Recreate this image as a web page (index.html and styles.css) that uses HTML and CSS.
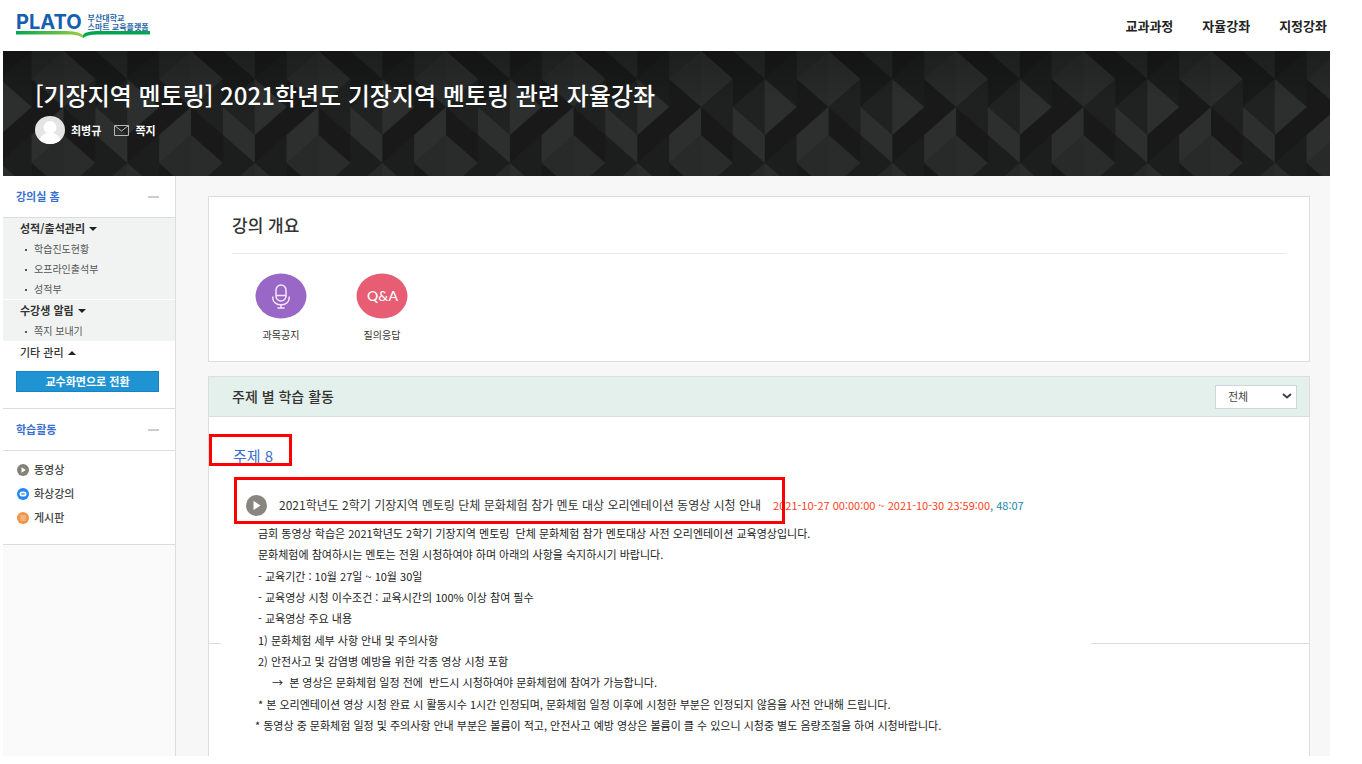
FILE: index.html
```html
<!DOCTYPE html>
<html lang="ko">
<head>
<meta charset="utf-8">
<meta name="viewport" content="width=device-width, initial-scale=1">
<title>PLATO 부산대학교 스마트 교육플랫폼</title>
<link rel="stylesheet" href="styles.css">
</head>
<body>
<header class="topbar">
  <a class="logo" href="#">
    <span class="logo-row">
      <span class="logo-word">PLATO</span>
      <span class="logo-sub"><span>부산대학교</span><span>스마트 교육플랫폼</span></span>
    </span>
    <svg class="logo-line" viewBox="0 0 134 7" width="134" height="7" aria-hidden="true">
      <defs><linearGradient id="leaf" x1="0" x2="1" y1="0" y2="0"><stop offset="0" stop-color="#00a651"/><stop offset=".35" stop-color="#39b54a"/><stop offset="1" stop-color="#9aca3c"/></linearGradient></defs>
      <path d="M0 0H46C58 0 64 1 67 4.500V7C63 4 58 3.500 50 3.500H0Z" fill="url(#leaf)"/>
      <path d="M134 0H84C74 0 69 1 67 4V7C71 4 76 3.500 84 3.500H134Z" fill="#00a651"/>
    </svg>
  </a>
  <nav class="menu">
    <a href="#">교과과정</a>
    <a href="#">자율강좌</a>
    <a href="#">지정강좌</a>
  </nav>
</header>

<section class="banner">
  <svg class="banner-art" width="100%" height="100%" aria-hidden="true">
    <defs>
      <pattern id="folds" width="127.500" height="140" patternUnits="userSpaceOnUse" patternTransform="translate(-3.200 0)">
        <svg width="127.500" height="140" viewBox="0 0 4 5" preserveAspectRatio="none">
          <rect width="4" height="5" fill="#191919"/>
          <path fill="#1b1d1c" d="M0 1L1 0V2Z"/>
          <path fill="#2d2f2e" d="M0 1L1 2L0 3Z"/>
          <path fill="#1c1e1d" d="M0 4L1 3V5Z"/>
          <path fill="#2b2d2c" d="M0 4L1 5H0Z"/>
          <path fill="#242625" d="M1 0H2L1 1Z"/>
          <path fill="#282a29" d="M1 1L2 0V2Z"/>
          <path fill="#2d2f2e" d="M1 3L2 2V3L1 4Z"/>
          <path fill="#282a29" d="M1 4L2 3V5Z"/>
          <path fill="#2a2c2b" d="M2 0L3 1L2 2Z"/>
          <path fill="#1f2120" d="M2 2L3 1V3Z"/>
          <path fill="#2a2c2b" d="M2 3L3 4L2 5Z"/>
          <path fill="#1c1e1d" d="M2 5L3 4V5Z"/>
          <path fill="#242625" d="M3 0H4V1Z"/>
          <path fill="#181a19" d="M3 0L4 1L3 2Z"/>
          <path fill="#202221" d="M3 2L4 1V3Z"/>
          <path fill="#2d2f2e" d="M3 2L4 3V4L3 3Z"/>
          <path fill="#1c1e1d" d="M3 3L4 4L3 5Z"/>
          <path fill="#272928" d="M3 5L4 4V5Z"/>
        </svg>
      </pattern>
      <linearGradient id="shade" x1="0" x2="0" y1="0" y2="1"><stop offset="0" stop-color="#000" stop-opacity=".2"/><stop offset=".4" stop-color="#000" stop-opacity="0"/></linearGradient>
    </defs>
    <rect width="100%" height="100%" fill="url(#folds)"/>
    <rect width="100%" height="100%" fill="url(#shade)"/>
  </svg>
  <h1 class="course-title">[기장지역 멘토링] 2021학년도 기장지역 멘토링 관련 자율강좌</h1>
  <div class="teacher">
    <svg class="avatar" viewBox="0 0 30 28" width="30" height="28" aria-hidden="true">
      <defs><clipPath id="face"><ellipse cx="15" cy="14" rx="15" ry="14"/></clipPath></defs>
      <g clip-path="url(#face)"><rect width="30" height="28" fill="#e4e4e4"/><ellipse cx="15" cy="11.500" rx="6.500" ry="6.500" fill="#fff"/><path d="M4 28C4 20 9 18 12 17H18C21 18 26 20 26 28Z" fill="#fff"/></g>
    </svg>
    <a class="teacher-name" href="#">최병규</a>
    <a class="message" href="#">
      <svg viewBox="0 0 15 11" width="15" height="11" fill="none" stroke="#b5b5b5" aria-hidden="true"><path d="M.5.5H14.500V10.500H.5ZM.5.5L7.500 6L14.500.5"/></svg>
      쪽지
    </a>
  </div>
</section>

<div class="columns">
  <aside class="sidebar">
    <section class="side-block">
      <div class="side-head"><h2>강의실 홈</h2><button class="fold" type="button" aria-label="강의실 홈 접기"></button></div>
      <div class="group">
        <h3>성적/출석관리 <i class="caret"></i></h3>
        <ul><li><a href="#">학습진도현황</a></li><li><a href="#">오프라인출석부</a></li><li><a href="#">성적부</a></li></ul>
      </div>
      <div class="group">
        <h3>수강생 알림 <i class="caret"></i></h3>
        <ul><li><a href="#">쪽지 보내기</a></li></ul>
      </div>
      <div class="group closed"><h3>기타 관리 <i class="caret up"></i></h3></div>
      <button class="switch" type="button">교수화면으로 전환</button>
    </section>
    <section class="side-block">
      <div class="side-head"><h2>학습활동</h2><button class="fold" type="button" aria-label="학습활동 접기"></button></div>
      <ul class="activities">
        <li><a href="#"><svg viewBox="0 0 12 12" width="12" height="12" aria-hidden="true"><circle cx="6" cy="6" r="6" fill="#858179"/><path d="M4.500 3.200L8.800 6L4.500 8.800Z" fill="#fff"/></svg>동영상</a></li>
        <li><a href="#"><svg viewBox="0 0 12 12" width="12" height="12" aria-hidden="true"><circle cx="6" cy="6" r="6" fill="#2386f5"/><rect x="2.500" y="3.500" width="7" height="5" rx="2.500" fill="#fff"/><path d="M4.300 6H7.700" stroke="#2386f5" stroke-width="1.200"/></svg>화상강의</a></li>
        <li><a href="#"><svg viewBox="0 0 12 12" width="12" height="12" aria-hidden="true"><circle cx="6" cy="6" r="6" fill="#f0944a"/><path d="M3.200 4H8.800M3.200 6H8.800M3.200 8H8.800" stroke="#fbe0c8" stroke-width=".8"/></svg>게시판</a></li>
      </ul>
    </section>
  </aside>

  <main class="content">
    <section class="panel overview">
      <h2>강의 개요</h2>
      <ul class="shortcuts">
        <li><a href="#">
          <svg viewBox="0 0 52 46" width="52" height="46" aria-hidden="true"><ellipse cx="26" cy="23" rx="25.500" ry="22.500" fill="#9967c5"/><g fill="none" stroke="#f3e6fa" stroke-width="1.500"><rect x="21" y="12" width="10" height="16" rx="5"/><path d="M21 22.500H31M17.800 23.500V25C17.800 34 34.200 34 34.200 25V23.500M26 31.500V35M22.500 35H29.500"/></g></svg>
          과목공지</a></li>
        <li><a href="#">
          <svg viewBox="0 0 52 46" width="52" height="46" aria-hidden="true"><ellipse cx="26" cy="23" rx="25.500" ry="22.500" fill="#e75d74"/><text class="qa" x="26.500" y="28" text-anchor="middle">Q&amp;A</text></svg>
          질의응답</a></li>
      </ul>
    </section>

    <section class="panel topics">
      <div class="topics-head">
        <h2>주제 별 학습 활동</h2>
        <span class="picker">
          <select aria-label="주제 선택"><option>전체</option></select>
          <svg viewBox="0 0 10 6" width="10" height="6" fill="none" stroke="#3d444b" stroke-width="2" aria-hidden="true"><path d="M1 1L5 4.500L9 1"/></svg>
        </span>
      </div>
      <div class="topic">
        <div class="rule"></div>
        <h3>주제 8</h3>
        <div class="video">
          <svg viewBox="0 0 21 21" width="21" height="21" aria-hidden="true"><circle cx="10.500" cy="10.500" r="10.500" fill="#8a867f"/><path d="M7.500 6L14.500 10.500L7.500 15Z" fill="#fff"/></svg>
          <a href="#">2021학년도 2학기 기장지역 멘토링 단체 문화체험 참가 멘토 대상 오리엔테이션 동영상 시청 안내</a>
          <span class="period">2021-10-27 00:00:00 ~ 2021-10-30 23:59:00<span class="length">, 48:07</span></span>
        </div>
        <div class="notes">
          <div>
            <p>금회 동영상 학습은 2021학년도 2학기 기장지역 멘토링&nbsp; 단체 문화체험 참가 멘토대상 사전 오리엔테이션 교육영상입니다.</p>
            <p>문화체험에 참여하시는 멘토는 전원 시청하여야 하며 아래의 사항을 숙지하시기 바랍니다.</p>
          </div>
          <div>
            <p>- 교육기간 : 10월 27일 ~ 10월 30일</p>
            <p>- 교육영상 시청 이수조건 : 교육시간의 100% 이상 참여 필수</p>
            <p>- 교육영상 주요 내용</p>
          </div>
          <div>
            <p>1) 문화체험 세부 사항 안내 및 주의사항</p>
            <p>2) 안전사고 및 감염병 예방을 위한 각종 영상 시청 포함</p>
            <p class="indent">→&nbsp; 본 영상은 문화체험 일정 전에&nbsp; 반드시 시청하여야 문화체험에 참여가 가능합니다.</p>
          </div>
          <div>
            <p>* 본 오리엔테이션 영상 시청 완료 시 활동시수 1시간 인정되며, 문화체험 일정 이후에 시청한 부분은 인정되지 않음을 사전 안내해 드립니다.</p>
            <p class="outdent">* 동영상 중 문화체험 일정 및 주의사항 안내 부분은 볼륨이 적고, 안전사고 예방 영상은 볼륨이 클 수 있으니 시청중 별도 음량조절을 하여 시청바랍니다.</p>
          </div>
        </div>
        <div class="mark mark-topic"></div>
        <div class="mark mark-video"></div>
      </div>
    </section>
  </main>
</div>
</body>
</html>
```
FILE: styles.css
```css
* { box-sizing: border-box; }

body {
  display: flex;
  flex-direction: column;
  min-height: 100vh;
  margin: 0;
  padding: 0 32px 8px 3px;
  background: #fff;
  color: #333;
  font: 11px/21px "Noto Sans CJK KR", "Noto Sans", sans-serif;
}

h1, h2, h3, p, ul { margin: 0; padding: 0; }
h1, h2, h3 { font-weight: 500; }
ul { list-style: none; }
a { color: inherit; text-decoration: none; }
svg { display: block; flex: none; }
button, select { font: inherit; }

/* Top bar */
.topbar {
  display: flex;
  justify-content: space-between;
  align-items: center;
  height: 51px;
  padding: 0 3px 0 13px;
}
.logo { display: flex; flex-direction: column; }
.logo-row { display: flex; align-items: center; gap: 6px; }
.logo-word { color: #1460ae; font: 700 20px/18px Inter, sans-serif; }
.logo-sub { display: flex; flex-direction: column; color: #2a66a5; font-size: 8px; font-weight: 700; line-height: 9px; white-space: nowrap; }
.menu { display: flex; gap: 29px; color: #222; font-size: 13px; font-weight: 700; }

/* Course banner */
.banner {
  position: relative;
  height: 125px;
  padding: 27px 32px 0;
  background: #191919;
  color: #fff;
}
.banner-art { position: absolute; inset: 0; }
.course-title { position: relative; font-size: 24px; line-height: 33px; }
.teacher { position: relative; display: flex; align-items: center; gap: 6px; margin-top: 5px; font-weight: 700; }
.message { display: flex; align-items: center; gap: 6px; margin-left: 7px; }

/* Page columns */
.columns { display: flex; flex: 1; background: #f7f7f7; }
.sidebar { width: 173px; flex: none; border-right: 1px solid #ddd; background: #fafafa; }
.side-block { background: #fff; border-bottom: 1px solid #ddd; }
.side-head {
  display: flex;
  justify-content: space-between;
  align-items: center;
  height: 42px;
  padding: 0 16px 0 13px;
  border-bottom: 1px solid #ddd;
}
.side-head h2 { color: #3a70cf; font-size: 11px; font-weight: 700; }
.fold { width: 11px; height: 2px; padding: 0; border: 0; background: #ccc; }
.group { padding: 0 17px; background: #f1f3f3; border-bottom: 1px solid #fff; }
.group h3 { display: flex; align-items: center; gap: 4px; font-size: 11px; font-weight: 700; }
.group li { position: relative; padding-left: 14px; color: #555; font-size: 10px; line-height: 20px; }
.group li::before { content: ""; position: absolute; left: 5px; top: 10px; width: 2px; height: 2px; background: #555; }
.group.closed { background: #fff; }
.group.closed h3 { font-weight: 500; }
.caret { border: 4px solid transparent; border-top-color: #222; border-bottom: 0; }
.caret.up { border-top: 0; border-bottom: 4px solid #222; }
.switch {
  display: block;
  width: calc(100% - 29px);
  height: 21px;
  margin: 7px 0 16px 13px;
  padding: 0;
  border: 1px solid #1883bf;
  background: #2094d2;
  color: #fff;
  font-weight: 700;
  line-height: 19px;
}
.activities { display: grid; gap: 3px; padding: 8px 14px 16px; color: #444; font-weight: 500; }
.activities a { display: flex; align-items: center; gap: 5px; }

/* Content */
.content { flex: 1; min-width: 0; display: flex; flex-direction: column; gap: 14px; padding: 20px 20px 0 32px; }
.panel { background: #fff; border: 1px solid #ddd; }
.overview { height: 166px; padding: 0 23px; }
.overview h2 { padding: 15px 0; border-bottom: 1px solid #e8e8e8; font-size: 17px; line-height: 26px; }
.shortcuts { display: flex; gap: 49px; padding: 19px 23px; }
.shortcuts a { display: flex; flex-direction: column; align-items: center; gap: 5px; font-size: 10px; }
.qa { fill: #fff; font: 500 14px Lato, sans-serif; }

.topics { flex: 1; border-bottom: 0; }
.topics-head {
  display: flex;
  justify-content: space-between;
  align-items: center;
  height: 40px;
  padding: 0 12px 0 23px;
  background: #e4f0eb;
  border-bottom: 1px solid #ddd;
}
.topics-head h2 { font-size: 14px; }
.picker { position: relative; }
.picker svg { position: absolute; right: 5px; top: 8px; pointer-events: none; }
.picker select {
  display: block;
  width: 82px;
  height: 24px;
  padding: 0 12px;
  appearance: none;
  border: 1px solid #cfd6da;
  border-radius: 0;
  background: #fff;
  color: #444;
}

.topic { position: relative; padding: 27px 12px 12px; }
.topic h3 { padding-left: 12px; color: #3a70cf; font-size: 15px; font-weight: 400; line-height: 24px; }
.video { display: flex; align-items: center; gap: 12px; padding: 25px 25px 6px; white-space: nowrap; font-size: 12px; line-height: 24px; }
.period { color: #fb3f24; font-size: 11px; }
.length { color: #2086ab; }
.notes { position: relative; display: grid; gap: 1px; max-width: 870px; padding: 0 37px; background: #fff; color: #222; white-space: nowrap; }
.indent { padding-left: 14px; }
.outdent { margin-left: -3px; }
.rule { position: absolute; left: 0; right: 0; top: 226px; border-top: 1px solid #ddd; }

/* Red highlight frames */
.mark { position: absolute; border: 3px solid #f00; pointer-events: none; }
.mark-topic { left: 0; top: 17px; width: 83px; height: 32px; }
.mark-video { left: 25px; top: 60px; width: 551px; height: 47px; }
```
